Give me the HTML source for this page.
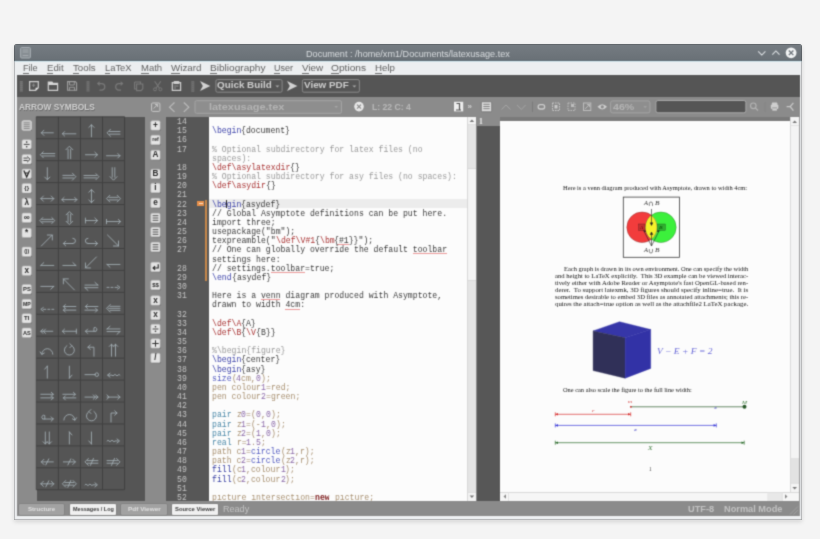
<!DOCTYPE html><html><head><meta charset="utf-8"><style>
*{margin:0;padding:0;box-sizing:border-box}
html,body{width:820px;height:539px;overflow:hidden;background:#f4f4f4;font-family:"Liberation Sans",sans-serif}
.a{position:absolute}
.t{position:absolute;white-space:pre;line-height:1}
.mono{font-family:"Liberation Mono",monospace}
.serif{font-family:"Liberation Serif",serif}
</style></head><body><svg width="0" height="0" style="position:absolute"><filter id="bl" x="0" y="0" width="100%" height="100%" color-interpolation-filters="sRGB"><feConvolveMatrix order="3" kernelMatrix="0.0625 0.25 0.0625 0.25 1 0.25 0.0625 0.25 0.0625" edgeMode="duplicate" preserveAlpha="true"/></filter></svg><div style="position:absolute;left:0;top:0;width:820px;height:539px;filter:url(#bl)"><div class="a" style="left:14px;top:44px;width:788px;height:475.5px;background:#eef0f2;border:1px solid #d8dadc;border-radius:3px 3px 0 0;box-shadow:0 2px 4px rgba(0,0,0,0.13)"></div><div class="a" style="left:14px;top:44px;width:788px;height:17px;background:linear-gradient(#757c82,#697076);border-radius:3px 3px 0 0"></div><div class="a" style="left:14px;top:60.2px;width:788px;height:0.9px;background:#5c6a72"></div><div class="a" style="left:14px;top:61px;width:788px;height:1.3px;background:#d6e8ee"></div><div class="a" style="left:15px;top:62px;width:786px;height:13px;background:#eceef0"></div><div class="a" style="left:17px;top:75px;width:783px;height:21.5px;background:#555555"></div><div class="a" style="left:17px;top:96.5px;width:783px;height:419.5px;background:#8b8b8b"></div><div class="a" style="left:36.5px;top:116.5px;width:108.5px;height:384.5px;background:#555555"></div><div class="a" style="left:166px;top:116.5px;width:42.5px;height:384.5px;background:#575757"></div><div class="a" style="left:208.5px;top:116.5px;width:258.8px;height:384.5px;background:#fcfcfc"></div><div class="a" style="left:467.3px;top:116.5px;width:9.2px;height:384.5px;background:#e4e4e4;border-left:1px solid #d8d8d8"></div><div class="a" style="left:467.8px;top:116.5px;width:8.7px;height:8.8px;background:#f3f3f3;border-bottom:0.6px solid #dedede"></div><div class="a" style="left:467.8px;top:168.4px;width:8.7px;height:112.6px;background:#f4f4f4;border-top:0.6px solid #d8d8d8;border-bottom:0.6px solid #d8d8d8"></div><div class="a" style="left:467.8px;top:492px;width:8.7px;height:9px;background:#f3f3f3;border-top:0.6px solid #dedede"></div><div class="a" style="left:476.5px;top:116.5px;width:23.5px;height:9.5px;background:#8b8b8b"></div><div class="a" style="left:476.5px;top:126px;width:23.5px;height:375px;background:#575757"></div><div class="a" style="left:500px;top:117px;width:290.4px;height:4px;background:#7a7a7a"></div><div class="a" style="left:500px;top:121px;width:290.4px;height:371.3px;background:#fcfcfc"></div><div class="a" style="left:790.2px;top:117px;width:9px;height:384px;background:#f4f4f4;border-left:1px solid #dadada"></div><div class="a" style="left:790.9px;top:458px;width:8.3px;height:25.4px;background:#e2e2e2"></div><div class="a" style="left:500px;top:492.3px;width:299.2px;height:8.8px;background:#f6f6f6;border-top:1px solid #dadada"></div><div class="a" style="left:23px;top:72.6px;width:5.572544361485504px;height:0.9px;background:#707070"></div><div class="a" style="left:47px;top:72.6px;width:6.4256607879584715px;height:0.9px;background:#707070"></div><div class="a" style="left:73px;top:72.6px;width:5.939739642594204px;height:0.9px;background:#707070"></div><div class="a" style="left:105px;top:72.6px;width:5.2173963355834125px;height:0.9px;background:#707070"></div><div class="a" style="left:140.8px;top:72.6px;width:7.943760761851209px;height:0.9px;background:#707070"></div><div class="a" style="left:170.6px;top:72.6px;width:9.221674283131625px;height:0.9px;background:#707070"></div><div class="a" style="left:209.8px;top:72.6px;width:6.738580777038053px;height:0.9px;background:#707070"></div><div class="a" style="left:273.7px;top:72.6px;width:6.498778953600236px;height:0.9px;background:#707070"></div><div class="a" style="left:302px;top:72.6px;width:6.578672675728715px;height:0.9px;background:#707070"></div><div class="a" style="left:331.2px;top:72.6px;width:7.921828032552768px;height:0.9px;background:#707070"></div><div class="a" style="left:375.1px;top:72.6px;width:7.022715186507636px;height:0.9px;background:#707070"></div><div class="a" style="left:208.5px;top:199.4px;width:258.8px;height:8.6px;background:#ececec"></div><div class="a" style="left:197px;top:200.7px;width:7px;height:5.3px;background:#e8904a"></div><div class="a" style="left:198.5px;top:203px;width:4px;height:0.9px;background:#fbe0c8"></div><div class="a" style="left:205.2px;top:200px;width:1.6px;height:81.3px;background:#c8884a"></div><div class="a" style="left:226.29999999999998px;top:200.2px;width:1px;height:7.6px;background:#222"></div><div class="a" style="left:337.34000000000003px;top:244.31px;width:11.76px;height:0.9px;background:#ec9a9a"></div><div class="a" style="left:412.8px;top:253.48px;width:34.300000000000004px;height:0.9px;background:#ec9a9a"></div><div class="a" style="left:270.7px;top:271.82px;width:34.300000000000004px;height:0.9px;background:#ec9a9a"></div><div class="a" style="left:260.9px;top:299.33px;width:19.6px;height:0.9px;background:#ec9a9a"></div><div class="a" style="left:285.4px;top:308.5px;width:14.700000000000001px;height:0.9px;background:#ec9a9a"></div><div class="a" style="left:18.6px;top:504px;width:45.6px;height:10.7px;background:#a2a2a2;border-radius:1px;box-shadow:0 0 0 0.5px #7a7a7a"></div><div class="a" style="left:69.6px;top:504px;width:46.400000000000006px;height:10.7px;background:#f0f0f0;border-radius:1px;box-shadow:0 0 0 0.5px #7a7a7a"></div><div class="a" style="left:121.2px;top:504px;width:45.499999999999986px;height:10.7px;background:#a2a2a2;border-radius:1px;box-shadow:0 0 0 0.5px #7a7a7a"></div><div class="a" style="left:172px;top:504px;width:46px;height:10.7px;background:#f0f0f0;border-radius:1px;box-shadow:0 0 0 0.5px #7a7a7a"></div><!--CONTENT--><svg class="a" style="left:0;top:0" width="820" height="539" viewBox="0 0 820 539"><rect x="19.8" y="81" width="3" height="10.599999999999994" fill="#767676"/><rect x="19.8" y="82" width="3" height="0.5" fill="#666"/><rect x="19.8" y="84" width="3" height="0.5" fill="#666"/><rect x="19.8" y="86" width="3" height="0.5" fill="#666"/><rect x="19.8" y="88" width="3" height="0.5" fill="#666"/><rect x="19.8" y="90" width="3" height="0.5" fill="#666"/><rect x="86.5" y="81" width="3" height="10.599999999999994" fill="#6e6e6e"/><rect x="86.5" y="82" width="3" height="0.5" fill="#666"/><rect x="86.5" y="84" width="3" height="0.5" fill="#666"/><rect x="86.5" y="86" width="3" height="0.5" fill="#666"/><rect x="86.5" y="88" width="3" height="0.5" fill="#666"/><rect x="86.5" y="90" width="3" height="0.5" fill="#666"/><rect x="191.3" y="81" width="3" height="11" fill="#6e6e6e"/><rect x="191.3" y="82" width="3" height="0.5" fill="#666"/><rect x="191.3" y="84" width="3" height="0.5" fill="#666"/><rect x="191.3" y="86" width="3" height="0.5" fill="#666"/><rect x="191.3" y="88" width="3" height="0.5" fill="#666"/><rect x="191.3" y="90" width="3" height="0.5" fill="#666"/><path d="M29.6 81.6 H38.3 V87.8 L35.6 90.3 H29.6 Z" fill="none" stroke="#cfcfcf" stroke-width="1.2"/><path d="M38.3 87.8 L35.6 90.3 V87.8 Z" fill="#e8e8e8"/><path d="M33.6 83.5 V87 M31.9 85.2 H35.3" stroke="#8a8a8a" stroke-width="1"/><path d="M48.3 82 H52 L53 83.3 H57.6 V90.3 H48.3 Z" fill="none" stroke="#cfcfcf" stroke-width="1.2"/><path d="M48.3 82 H52 L53 83.3 H57.6 V85 H48.3 Z" fill="#d8d8d8"/><path d="M67.6 81.6 H75.3 L76.6 82.9 V90.3 H67.6 Z" fill="none" stroke="#a0a0a0" stroke-width="1.1"/><path d="M69.5 81.6 V85 H74.3 V81.6 M69.5 90.3 V87.3 H74.5 V90.3" fill="none" stroke="#a0a0a0" stroke-width="0.9"/><path d="M98.3 83.6 H101.5 A3.3 3.3 0 0 1 101.5 90.2 H99.5" fill="none" stroke="#7a7a7a" stroke-width="1.2"/><path d="M96.9 83.6 L99.6 81.2 V86 Z" fill="#7a7a7a"/><path d="M122 83.6 H119 A3.3 3.3 0 0 0 119 90.2 H121" fill="none" stroke="#7a7a7a" stroke-width="1.2"/><path d="M123.4 83.6 L120.7 81.2 V86 Z" fill="#7a7a7a"/><path d="M134.6 82 H140.5 V84 M134.6 82 V89 H136.3" fill="none" stroke="#7a7a7a" stroke-width="1.1"/><path d="M136.6 84 H142.8 V88.8 L141 90.6 H136.6 Z" fill="none" stroke="#7a7a7a" stroke-width="1.1"/><path d="M154.6 81.3 L159.3 88 M160.8 81.3 L156.1 88" stroke="#7a7a7a" stroke-width="1.1"/><circle cx="155" cy="89.3" r="1.5" fill="none" stroke="#7a7a7a" stroke-width="1"/><circle cx="160.4" cy="89.3" r="1.5" fill="none" stroke="#7a7a7a" stroke-width="1"/><path d="M172.3 82.6 H180.6 V90.4 H172.3 Z" fill="none" stroke="#cfcfcf" stroke-width="1.2"/><rect x="173.6" y="81" width="5.8" height="3" rx="0.8" fill="#cfcfcf"/><path d="M173.8 86 H178.5 M173.8 88 H176" stroke="#9a9a9a" stroke-width="0.9"/><path d="M200 81 L210.3 86.0 L200 91 L202.8 86.0 Z" fill="#d2d2d2"/><path d="M287 81 L297.4 86.0 L287 91 L289.8 86.0 Z" fill="#d2d2d2"/><rect x="215.9" y="79.6" width="66.2" height="12.6" rx="1.5" fill="none" stroke="#8a8a8a" stroke-width="1"/><path d="M275.4 85.4 H279.4 L277.4 87.4 Z" fill="#a8a8a8"/><rect x="302.4" y="79.6" width="57" height="12.6" rx="1.5" fill="none" stroke="#8a8a8a" stroke-width="1"/><path d="M352.4 85.4 H356.4 L354.4 87.4 Z" fill="#a8a8a8"/><g stroke="#404040" stroke-width="1" fill="none"><path d="M36.3 116.80 H124.58"/><path d="M36.3 138.74 H124.58"/><path d="M36.3 160.68 H124.58"/><path d="M36.3 182.62 H124.58"/><path d="M36.3 204.56 H124.58"/><path d="M36.3 226.50 H124.58"/><path d="M36.3 248.44 H124.58"/><path d="M36.3 270.38 H124.58"/><path d="M36.3 292.32 H124.58"/><path d="M36.3 314.26 H124.58"/><path d="M36.3 336.20 H124.58"/><path d="M36.3 358.14 H124.58"/><path d="M36.3 380.08 H124.58"/><path d="M36.3 402.02 H124.58"/><path d="M36.3 423.96 H124.58"/><path d="M36.3 445.90 H124.58"/><path d="M36.3 467.84 H124.58"/><path d="M36.3 489.78 H124.58"/><path d="M36.30 116.8 V489.78"/><path d="M58.37 116.8 V489.78"/><path d="M80.44 116.8 V489.78"/><path d="M102.51 116.8 V489.78"/><path d="M124.58 116.8 V489.78"/></g><g stroke="#a4b0b6" stroke-width="0.85" fill="none" stroke-linecap="round" stroke-linejoin="round"><path transform="translate(36.80 116.80)" d="M4.5 16 L16.5 16 M7.1 13.4 L4.5 16 L7.1 18.6"/><path transform="translate(58.87 116.80)" d="M3.5 17 L17 17 M5.7 14.8 L3.5 17 L5.7 19.2"/><path transform="translate(80.94 116.80)" d="M10.5 8 L10.5 20 M7.9 10.6 L10.5 8 L13.1 10.6"/><path transform="translate(103.01 116.80)" d="M6.5 14.7 L17 14.7 M6.5 17.3 L17 17.3 M7.5 12.5 L4 16 L7.5 19.5"/><path transform="translate(36.80 138.74)" d="M5.5 14.8 L18 14.8 M5.5 17.2 L18 17.2 M6.5 13 L3.5 16 L6.5 19"/><path transform="translate(58.87 138.74)" d="M9.2 10.5 L9.2 20 M11.8 10.5 L11.8 20 M7 11 L10.5 7.5 L14 11"/><path transform="translate(80.94 138.74)" d="M4.5 16 L16.5 16 M13.9 13.4 L16.5 16 L13.9 18.6"/><path transform="translate(103.01 138.74)" d="M3.5 17 L17 17 M14.8 14.8 L17 17 L14.8 19.2"/><path transform="translate(36.80 160.68)" d="M10.5 7 L10.5 19 M7.9 16.4 L10.5 19 L13.1 16.4"/><path transform="translate(58.87 160.68)" d="M4 14.7 L14.5 14.7 M4 17.3 L14.5 17.3 M13.5 12.5 L17 16 L13.5 19.5"/><path transform="translate(80.94 160.68)" d="M3 14.8 L15.5 14.8 M3 17.2 L15.5 17.2 M15 13 L18 16 L15 19"/><path transform="translate(103.01 160.68)" d="M9.2 7 L9.2 16.5 M11.8 7 L11.8 16.5 M7 16 L10.5 19.5 L14 16"/><path transform="translate(36.80 182.62)" d="M4 16 L17 16 M6.6 13.4 L4 16 L6.6 18.6 M14.4 13.4 L17 16 L14.4 18.6"/><path transform="translate(58.87 182.62)" d="M3 17 L18 17 M5.2 14.8 L3 17 L5.2 19.2 M15.8 14.8 L18 17 L15.8 19.2"/><path transform="translate(80.94 182.62)" d="M10.5 7 L10.5 20 M7.9 9.6 L10.5 7 L13.1 9.6 M7.9 17.4 L10.5 20 L13.1 17.4"/><path transform="translate(103.01 182.62)" d="M6 14.7 L15 14.7 M6 17.3 L15 17.3 M6.8 12.7 L3.5 16 L6.8 19.3 M14.2 12.7 L17.5 16 L14.2 19.3"/><path transform="translate(36.80 204.56)" d="M5 14.8 L16 14.8 M5 17.2 L16 17.2 M6 13 L3 16 L6 19 M15 13 L18 16 L15 19"/><path transform="translate(58.87 204.56)" d="M9.2 9.5 L9.2 17.5 M11.8 9.5 L11.8 17.5 M7.2 10.3 L10.5 7 L13.8 10.3 M7.2 16.7 L10.5 20 L13.8 16.7"/><path transform="translate(80.94 204.56)" d="M4.5 16 L16.5 16 M13.9 13.4 L16.5 16 L13.9 18.6 M4.5 13.5 L4.5 18.5"/><path transform="translate(103.01 204.56)" d="M3.5 17 L17.5 17 M15.3 14.8 L17.5 17 L15.3 19.2 M3.5 14.8 L3.5 19.2"/><path transform="translate(36.80 226.50)" d="M4.5 19.5 L15.5 8.5 M10.5 8.5 L15.5 8.5 L15.5 13.5"/><path transform="translate(58.87 226.50)" d="M4.5 17 L14 17 M6.8 14.7 L4.5 17 L6.8 19.3 M14 17 A2.6 2.6 0 0 0 14 11.8"/><path transform="translate(80.94 226.50)" d="M7 17 L16.5 17 M14.2 14.7 L16.5 17 L14.2 19.3 M7 17 A2.6 2.6 0 0 1 7 11.8"/><path transform="translate(103.01 226.50)" d="M4.5 8.5 L15.5 19.5 M15.5 14.5 L15.5 19.5 L10.5 19.5"/><path transform="translate(36.80 248.44)" d="M4 17 L17 17 M4 17 L7 14.2"/><path transform="translate(58.87 248.44)" d="M4 17 L17 17 M17 17 L14 14.2"/><path transform="translate(80.94 248.44)" d="M15.5 8.5 L4.5 19.5 M4.5 14.5 L4.5 19.5 L9.5 19.5"/><path transform="translate(103.01 248.44)" d="M4 16 L17 16 M4 16 L7 18.8"/><path transform="translate(36.80 270.38)" d="M4 16 L17 16 M17 16 L14 18.8"/><path transform="translate(58.87 270.38)" d="M15.5 19.5 L4.5 8.5 M4.5 13.5 L4.5 8.5 L9.5 8.5"/><path transform="translate(80.94 270.38)" d="M4 14.7 L17 14.7 M17 14.7 L14 12 M4 17.3 L17 17.3 M4 17.3 L7 20"/><path transform="translate(103.01 270.38)" d="M4 17 H6 M8 17 H10 M12 17 H14.5 M14.5 15.2 L17 17 L14.5 18.8"/><path transform="translate(36.80 292.32)" d="M17 17 H15 M13 17 H11 M9 17 H6.5 M6.5 15.2 L4 17 L6.5 18.8"/><path transform="translate(58.87 292.32)" d="M4.5 14.2 L17 14.2 M6.5 12.2 L4.5 14.2 L6.5 16.2 M4.5 17.8 L17 17.8 M6.5 15.8 L4.5 17.8 L6.5 19.8"/><path transform="translate(80.94 292.32)" d="M4.5 14.2 L17 14.2 M6.5 12.2 L4.5 14.2 L6.5 16.2 M4 17.8 L16.5 17.8 M14.5 15.8 L16.5 17.8 L14.5 19.8"/><path transform="translate(103.01 292.32)" d="M7 14 L17 14 M5.5 16 L17 16 M7 18 L17 18 M7.3 12.2 L3.5 16 L7.3 19.8"/><path transform="translate(36.80 314.26)" d="M4 17 L16 17 M6.2 14.8 L4 17 L6.2 19.2 M8.7 14.8 L6.5 17 L8.7 19.2"/><path transform="translate(58.87 314.26)" d="M3.5 17 L17.5 17 M5.7 14.8 L3.5 17 L5.7 19.2 M17.5 14.8 L17.5 19.2"/><path transform="translate(80.94 314.26)" d="M4.5 17 L15 17 M6.7 14.8 L4.5 17 L6.7 19.2 M13 17 V13.5 A2 2 0 1 1 15 17"/><path transform="translate(103.01 314.26)" d="M4 14.7 L17 14.7 M4 14.7 L7 12 M4 17.3 L17 17.3 M17 17.3 L14 20"/><path transform="translate(36.80 336.20)" d="M5 18 A5.5 5.5 0 0 1 16 18 M3.3 15.7 L5 18.2 L7.5 16.8"/><path transform="translate(58.87 336.20)" d="M8 9.5 A5 5 0 1 0 13 9.5 M11 7.5 L13 9.5 L11 11.5"/><path transform="translate(80.94 336.20)" d="M13 20 V11 H7 M9.3 8.7 L7 11 L9.3 13.3"/><path transform="translate(103.01 336.20)" d="M8.5 8 L8.5 20 M6.3 10.2 L8.5 8 L10.7 10.2 M12.5 8 L12.5 20 M10.3 10.2 L12.5 8 L14.7 10.2"/><path transform="translate(36.80 358.14)" d="M10.5 8 L10.5 20 M10.5 8 L7.9 11"/><path transform="translate(58.87 358.14)" d="M10.5 8 L10.5 20 M10.5 20 L13.1 17"/><path transform="translate(80.94 358.14)" d="M4 16.5 L14 16.5 M14 16.5 a1.8 1.8 0 1 0 3.6 0 a1.8 1.8 0 1 0 -3.6 0"/><path transform="translate(103.01 358.14)" d="M17 17 q-1 -1.5 -2 0 t-2 0 t-2 0 t-2 0 H5 M7 15 L4.5 17 L7 19"/><path transform="translate(36.80 380.08)" d="M4 14.2 L16.5 14.2 M14.5 12.2 L16.5 14.2 L14.5 16.2 M4 17.8 L16.5 17.8 M14.5 15.8 L16.5 17.8 L14.5 19.8"/><path transform="translate(58.87 380.08)" d="M4 14.2 L16.5 14.2 M14.5 12.2 L16.5 14.2 L14.5 16.2 M4.5 17.8 L17 17.8 M6.5 15.8 L4.5 17.8 L6.5 19.8"/><path transform="translate(80.94 380.08)" d="M4 17 L17 17 M14.8 14.8 L17 17 L14.8 19.2 M12.3 14.8 L14.5 17 L12.3 19.2"/><path transform="translate(103.01 380.08)" d="M4 17 L17 17 M14.8 14.8 L17 17 L14.8 19.2 M4 14.8 L6 17 L4 19.2"/><path transform="translate(36.80 402.02)" d="M6 17 L16.5 17 M14.3 14.8 L16.5 17 L14.3 19.2 M8 17 V13.5 A2 2 0 1 0 6 17"/><path transform="translate(58.87 402.02)" d="M5 18 A5.5 5.5 0 0 1 16 18 M13.5 16.8 L16 18.2 L17.7 15.7"/><path transform="translate(80.94 402.02)" d="M13 9.5 A5 5 0 1 1 8 9.5 M10 7.5 L8 9.5 L10 11.5"/><path transform="translate(103.01 402.02)" d="M8 20 V11 H14 M11.7 8.7 L14 11 L11.7 13.3"/><path transform="translate(36.80 423.96)" d="M8.5 8 L8.5 20 M6.3 17.8 L8.5 20 L10.7 17.8 M12.5 8 L12.5 20 M10.3 17.8 L12.5 20 L14.7 17.8"/><path transform="translate(58.87 423.96)" d="M10.5 8 L10.5 20 M10.5 8 L13.1 11"/><path transform="translate(80.94 423.96)" d="M10.5 8 L10.5 20 M10.5 20 L7.9 17"/><path transform="translate(103.01 423.96)" d="M4 17 q1 -1.5 2 0 t2 0 t2 0 t2 0 H15 M14 15 L16.5 17 L14 19"/><path transform="translate(36.80 445.90)" d="M4.5 16 L16.5 16 M7.1 13.4 L4.5 16 L7.1 18.6 M9 19 L12 13"/><path transform="translate(58.87 445.90)" d="M4.5 16 L16.5 16 M13.9 13.4 L16.5 16 L13.9 18.6 M9 19 L12 13"/><path transform="translate(80.94 445.90)" d="M6.5 14.7 L17 14.7 M6.5 17.3 L17 17.3 M7.5 12.5 L4 16 L7.5 19.5 M9.5 19.5 L12.5 12.5"/><path transform="translate(103.01 445.90)" d="M4 14.7 L14.5 14.7 M4 17.3 L14.5 17.3 M13.5 12.5 L17 16 L13.5 19.5 M8.5 19.5 L11.5 12.5"/><path transform="translate(36.80 467.84)" d="M4 16 L17 16 M6.6 13.4 L4 16 L6.6 18.6 M14.4 13.4 L17 16 L14.4 18.6 M9 19 L12 13"/><path transform="translate(58.87 467.84)" d="M6 14.7 L15 14.7 M6 17.3 L15 17.3 M6.8 12.7 L3.5 16 L6.8 19.3 M14.2 12.7 L17.5 16 L14.2 19.3 M9 19.5 L12 12.5"/><path transform="translate(80.94 467.84)" d="M4 17 q1 -1.5 2 0 t2 0 t2 0 t2 0 H15 M14 15 L16.5 17 L14 19"/></g><rect x="22.60" y="121.50" width="9.4" height="9.4" rx="1.5" fill="#6e6e6e"/><rect x="22.00" y="120.80" width="9.4" height="9.4" rx="1.5" fill="#e4e4e4" stroke="#b8b8b8" stroke-width="0.6"/><rect x="22.00" y="120.80" width="9.4" height="9.4" rx="1.5" fill="#c4c4c4" stroke="#d8d8d8" stroke-width="0.6"/><path d="M23.80 122.80 H29.60" stroke="#8a8a8a" stroke-width="0.9"/><path d="M23.80 124.70 H29.60" stroke="#8a8a8a" stroke-width="0.9"/><path d="M23.80 126.60 H29.60" stroke="#8a8a8a" stroke-width="0.9"/><path d="M23.80 128.50 H29.60" stroke="#8a8a8a" stroke-width="0.9"/><rect x="22.60" y="140.40" width="9.4" height="9.4" rx="1.5" fill="#6e6e6e"/><rect x="22.00" y="139.70" width="9.4" height="9.4" rx="1.5" fill="#e4e4e4" stroke="#b8b8b8" stroke-width="0.6"/><path d="M23.80 144.40 H29.60" stroke="#333" stroke-width="0.9"/><circle cx="26.7" cy="142.1" r="0.8" fill="#333"/><circle cx="26.7" cy="146.70000000000002" r="0.8" fill="#333"/><rect x="22.60" y="155.30" width="9.4" height="9.4" rx="1.5" fill="#6e6e6e"/><rect x="22.00" y="154.60" width="9.4" height="9.4" rx="1.5" fill="#e4e4e4" stroke="#b8b8b8" stroke-width="0.6"/><path d="M23.50 158.10 H27.70 M23.50 160.50 H27.70 M27.20 156.50 L30.10 159.30 L27.20 162.10" fill="none" stroke="#333" stroke-width="0.9"/><rect x="22.60" y="169.80" width="9.4" height="9.4" rx="1.5" fill="#6e6e6e"/><rect x="22.00" y="169.10" width="9.4" height="9.4" rx="1.5" fill="#e4e4e4" stroke="#b8b8b8" stroke-width="0.6"/><path d="M23.80 170.60 L26.70 177.00 L29.60 170.60 M24.70 173.00 H28.70" fill="none" stroke="#222" stroke-width="1.2"/><rect x="22.60" y="184.20" width="9.4" height="9.4" rx="1.5" fill="#6e6e6e"/><rect x="22.00" y="183.50" width="9.4" height="9.4" rx="1.5" fill="#e4e4e4" stroke="#b8b8b8" stroke-width="0.6"/><rect x="22.60" y="198.90" width="9.4" height="9.4" rx="1.5" fill="#6e6e6e"/><rect x="22.00" y="198.20" width="9.4" height="9.4" rx="1.5" fill="#e4e4e4" stroke="#b8b8b8" stroke-width="0.6"/><rect x="22.60" y="213.80" width="9.4" height="9.4" rx="1.5" fill="#6e6e6e"/><rect x="22.00" y="213.10" width="9.4" height="9.4" rx="1.5" fill="#e4e4e4" stroke="#b8b8b8" stroke-width="0.6"/><rect x="22.60" y="228.90" width="9.4" height="9.4" rx="1.5" fill="#6e6e6e"/><rect x="22.00" y="228.20" width="9.4" height="9.4" rx="1.5" fill="#e4e4e4" stroke="#b8b8b8" stroke-width="0.6"/><rect x="22.60" y="247.80" width="9.4" height="9.4" rx="1.5" fill="#6e6e6e"/><rect x="22.00" y="247.10" width="9.4" height="9.4" rx="1.5" fill="#e4e4e4" stroke="#b8b8b8" stroke-width="0.6"/><rect x="22.60" y="266.70" width="9.4" height="9.4" rx="1.5" fill="#6e6e6e"/><rect x="22.00" y="266.00" width="9.4" height="9.4" rx="1.5" fill="#e4e4e4" stroke="#b8b8b8" stroke-width="0.6"/><rect x="22.60" y="285.30" width="9.4" height="9.4" rx="1.5" fill="#6e6e6e"/><rect x="22.00" y="284.60" width="9.4" height="9.4" rx="1.5" fill="#e4e4e4" stroke="#b8b8b8" stroke-width="0.6"/><rect x="22.60" y="300.00" width="9.4" height="9.4" rx="1.5" fill="#6e6e6e"/><rect x="22.00" y="299.30" width="9.4" height="9.4" rx="1.5" fill="#e4e4e4" stroke="#b8b8b8" stroke-width="0.6"/><rect x="22.60" y="314.40" width="9.4" height="9.4" rx="1.5" fill="#6e6e6e"/><rect x="22.00" y="313.70" width="9.4" height="9.4" rx="1.5" fill="#e4e4e4" stroke="#b8b8b8" stroke-width="0.6"/><rect x="22.60" y="328.70" width="9.4" height="9.4" rx="1.5" fill="#6e6e6e"/><rect x="22.00" y="328.00" width="9.4" height="9.4" rx="1.5" fill="#e4e4e4" stroke="#b8b8b8" stroke-width="0.6"/><rect x="151.40" y="121.50" width="9.4" height="9.4" rx="1.5" fill="#6e6e6e"/><rect x="150.80" y="120.80" width="9.4" height="9.4" rx="1.5" fill="#e4e4e4" stroke="#b8b8b8" stroke-width="0.6"/><rect x="151.40" y="136.00" width="9.4" height="9.4" rx="1.5" fill="#6e6e6e"/><rect x="150.80" y="135.30" width="9.4" height="9.4" rx="1.5" fill="#e4e4e4" stroke="#b8b8b8" stroke-width="0.6"/><rect x="151.40" y="151.00" width="9.4" height="9.4" rx="1.5" fill="#6e6e6e"/><rect x="150.80" y="150.30" width="9.4" height="9.4" rx="1.5" fill="#e4e4e4" stroke="#b8b8b8" stroke-width="0.6"/><rect x="151.40" y="170.00" width="9.4" height="9.4" rx="1.5" fill="#6e6e6e"/><rect x="150.80" y="169.30" width="9.4" height="9.4" rx="1.5" fill="#e4e4e4" stroke="#b8b8b8" stroke-width="0.6"/><rect x="151.40" y="184.00" width="9.4" height="9.4" rx="1.5" fill="#6e6e6e"/><rect x="150.80" y="183.30" width="9.4" height="9.4" rx="1.5" fill="#e4e4e4" stroke="#b8b8b8" stroke-width="0.6"/><rect x="151.40" y="199.00" width="9.4" height="9.4" rx="1.5" fill="#6e6e6e"/><rect x="150.80" y="198.30" width="9.4" height="9.4" rx="1.5" fill="#e4e4e4" stroke="#b8b8b8" stroke-width="0.6"/><rect x="151.40" y="214.00" width="9.4" height="9.4" rx="1.5" fill="#6e6e6e"/><rect x="150.80" y="213.30" width="9.4" height="9.4" rx="1.5" fill="#e4e4e4" stroke="#b8b8b8" stroke-width="0.6"/><path d="M152.60 215.70 H158.40" stroke="#444" stroke-width="0.9"/><path d="M152.60 218.00 H158.40" stroke="#444" stroke-width="0.9"/><path d="M152.60 220.30 H158.40" stroke="#444" stroke-width="0.9"/><rect x="151.40" y="228.00" width="9.4" height="9.4" rx="1.5" fill="#6e6e6e"/><rect x="150.80" y="227.30" width="9.4" height="9.4" rx="1.5" fill="#e4e4e4" stroke="#b8b8b8" stroke-width="0.6"/><path d="M152.60 229.70 H158.40" stroke="#444" stroke-width="0.9"/><path d="M152.60 232.00 H158.40" stroke="#444" stroke-width="0.9"/><path d="M152.60 234.30 H158.40" stroke="#444" stroke-width="0.9"/><rect x="151.40" y="243.00" width="9.4" height="9.4" rx="1.5" fill="#6e6e6e"/><rect x="150.80" y="242.30" width="9.4" height="9.4" rx="1.5" fill="#e4e4e4" stroke="#b8b8b8" stroke-width="0.6"/><path d="M152.60 244.70 H158.40" stroke="#444" stroke-width="0.9"/><path d="M152.60 247.00 H158.40" stroke="#444" stroke-width="0.9"/><path d="M152.60 249.30 H158.40" stroke="#444" stroke-width="0.9"/><rect x="151.40" y="263.00" width="9.4" height="9.4" rx="1.5" fill="#6e6e6e"/><rect x="150.80" y="262.30" width="9.4" height="9.4" rx="1.5" fill="#e4e4e4" stroke="#b8b8b8" stroke-width="0.6"/><path d="M158.20 264.30 V268.00 H153.30 M155.10 266.20 L153.10 268.00 L155.10 269.80" fill="none" stroke="#222" stroke-width="1.1"/><rect x="151.40" y="281.00" width="9.4" height="9.4" rx="1.5" fill="#6e6e6e"/><rect x="150.80" y="280.30" width="9.4" height="9.4" rx="1.5" fill="#e4e4e4" stroke="#b8b8b8" stroke-width="0.6"/><rect x="151.40" y="296.50" width="9.4" height="9.4" rx="1.5" fill="#6e6e6e"/><rect x="150.80" y="295.80" width="9.4" height="9.4" rx="1.5" fill="#e4e4e4" stroke="#b8b8b8" stroke-width="0.6"/><rect x="151.40" y="311.00" width="9.4" height="9.4" rx="1.5" fill="#6e6e6e"/><rect x="150.80" y="310.30" width="9.4" height="9.4" rx="1.5" fill="#e4e4e4" stroke="#b8b8b8" stroke-width="0.6"/><rect x="151.40" y="325.00" width="9.4" height="9.4" rx="1.5" fill="#6e6e6e"/><rect x="150.80" y="324.30" width="9.4" height="9.4" rx="1.5" fill="#e4e4e4" stroke="#b8b8b8" stroke-width="0.6"/><path d="M152.60 329.00 H158.40" stroke="#333" stroke-width="0.9"/><circle cx="155.5" cy="326.7" r="0.8" fill="#333"/><circle cx="155.5" cy="331.3" r="0.8" fill="#333"/><rect x="151.40" y="339.50" width="9.4" height="9.4" rx="1.5" fill="#6e6e6e"/><rect x="150.80" y="338.80" width="9.4" height="9.4" rx="1.5" fill="#e4e4e4" stroke="#b8b8b8" stroke-width="0.6"/><path d="M155.50 340.30 V346.70 M152.30 343.50 H158.70" stroke="#333" stroke-width="1"/><rect x="151.40" y="354.00" width="9.4" height="9.4" rx="1.5" fill="#6e6e6e"/><rect x="150.80" y="353.30" width="9.4" height="9.4" rx="1.5" fill="#e4e4e4" stroke="#b8b8b8" stroke-width="0.6"/><rect x="151.6" y="103" width="8.3" height="8.4" rx="1" fill="none" stroke="#c8c8c8" stroke-width="1"/><path d="M153.6 108.5 L157.6 104.5 M155 104.5 H157.6 V107" fill="none" stroke="#c8c8c8" stroke-width="0.9"/><path d="M174.5 102.5 L169.5 107.2 L174.5 111.9" fill="none" stroke="#bdbdbd" stroke-width="1.1"/><path d="M183.8 102.5 L188.8 107.2 L183.8 111.9" fill="none" stroke="#bdbdbd" stroke-width="1.1"/><rect x="195" y="100.7" width="146.5" height="12.6" rx="1.5" fill="#8e8e8e" stroke="#a4a4a4" stroke-width="1"/><path d="M334.3 106 H338 L336.15 107.9 Z" fill="#a6a6a6"/><circle cx="359" cy="106.6" r="4.8" fill="#e8e8e8"/><path d="M357 104.6 L361 108.6 M361 104.6 L357 108.6" stroke="#8b8b8b" stroke-width="1.2"/><rect x="454" y="101.8" width="9.2" height="9.6" fill="#eeeeee"/><path d="M456.5 103.5 H459.5 V110 M456 110 H461" stroke="#555" stroke-width="1.2" fill="none"/><rect x="481.3" y="101.8" width="10.4" height="10" rx="1" fill="#dcdcdc" stroke="#707070" stroke-width="0.8"/><path d="M483.3 104.3 H489.7 M483.3 106.5 H489.7 M483.3 108.7 H489.7" stroke="#777" stroke-width="0.9"/><path d="M501.5 109.5 L506 105 L510.5 109.5 M517 105 L521.3 109.5 L525.6 105" fill="none" stroke="#a4a4a4" stroke-width="1"/><path d="M532.5 101.5 V112" stroke="#7a7a7a" stroke-width="1"/><rect x="538.2" y="104.6" width="6.4" height="4.4" rx="2" fill="none" stroke="#cdcdcd" stroke-width="1.3"/><path d="M552.5 103 H559.5 V110.5 H552.5 Z" fill="none" stroke="#c8c8c8" stroke-width="1" stroke-dasharray="1.5 1"/><rect x="554.5" y="105" width="3" height="3.5" fill="#c8c8c8"/><path d="M568 103 H575 V110.5 H568 Z" fill="none" stroke="#bdbdbd" stroke-width="1" stroke-dasharray="1.5 1"/><rect x="571" y="104" width="3" height="3" fill="#bdbdbd"/><rect x="583.5" y="103" width="7.3" height="7.5" fill="none" stroke="#bdbdbd" stroke-width="1"/><path d="M585 109 L589.5 104.5 M587 104.5 H589.5 V107" fill="none" stroke="#bdbdbd" stroke-width="0.9"/><path d="M597.5 106.8 Q602.3 101.5 607 106.8 Q602.3 112 597.5 106.8 Z" fill="#cfcfcf"/><circle cx="602.3" cy="106.8" r="1.6" fill="#8b8b8b"/><rect x="610.6" y="100.9" width="39.4" height="12" rx="2" fill="#8e8e8e" stroke="#a4a4a4" stroke-width="1"/><path d="M643.3 106.2 H647 L645.15 108.1 Z" fill="#a6a6a6"/><rect x="655.9" y="100.5" width="90" height="12.3" rx="2" fill="#555555" stroke="#a8a8a8" stroke-width="1"/><circle cx="753.3" cy="105.8" r="2.8" fill="none" stroke="#b4b4b4" stroke-width="1.1"/><path d="M755.3 107.8 L758 110.5" stroke="#b4b4b4" stroke-width="1.2"/><rect x="771.8" y="102.6" width="5.6" height="2.4" rx="0.8" fill="#cfcfcf"/><rect x="770.8" y="104.6" width="7.6" height="4.4" rx="1.2" fill="#cfcfcf"/><rect x="772.3" y="108.4" width="4.6" height="2.2" fill="#cfcfcf"/><path d="M772.2 107.9 H777" stroke="#8b8b8b" stroke-width="0.8"/><path d="M786.6 106.6 H790.2 L793.4 102.9 M790.2 106.6 L793.4 110.6" fill="none" stroke="#c8c8c8" stroke-width="1.3"/><path d="M765 102 V112" stroke="#848484" stroke-width="0.8"/><path d="M758.2 51.4 L761.8 55 L765.4 51.4 M772.3 54.6 L775.9 51 L779.5 54.6" fill="none" stroke="#dfe3e6" stroke-width="1.05"/><circle cx="791.1" cy="52.8" r="5.4" fill="#f2f4f5"/><path d="M788.8 50.5 L793.4 55.1 M793.4 50.5 L788.8 55.1" stroke="#6a7178" stroke-width="1.3"/><rect x="20.6" y="47.5" width="9.8" height="10.5" rx="1" fill="#868d92" stroke="#a8afb4" stroke-width="1"/><path d="M22.6 50 H28.4 M22.6 52 H28.4 M22.6 55.5 H28.4" stroke="#a8aeb2" stroke-width="0.9"/><path d="M469.6 122 L471.9 119.6 L474.2 122 Z" fill="#777"/><path d="M469.6 495.5 L471.9 497.9 L474.2 495.5 Z" fill="#777"/><path d="M790.5 125.5 H799" stroke="#e0e0e0" stroke-width="0.8"/><path d="M792.4 123 L794.7 120.6 L797 123 Z" fill="#777"/><path d="M790.5 483.4 H799" stroke="#dadada" stroke-width="0.8"/><path d="M792.4 487 L794.7 489.4 L797 487 Z" fill="#777"/><path d="M503.5 496.5 L506 494.2 V498.8 Z" fill="#888"/><path d="M508.5 492.5 V501" stroke="#e2e2e2" stroke-width="1"/><rect x="767.2" y="492.8" width="15" height="8.2" fill="#e8e8e8"/><path d="M785 494.2 L787.5 496.5 L785 498.8 Z" fill="#888"/><path d="M782.3 492.5 V501" stroke="#e2e2e2" stroke-width="1"/><path d="M799.5 117 V516" stroke="#9a9a9a" stroke-width="1"/><rect x="623.3" y="197.1" width="56.3" height="60.2" fill="#fdfdfd" stroke="#3a3a3a" stroke-width="0.8"/><defs><clipPath id="cl"><circle cx="642.1" cy="227.3" r="15.3"/></clipPath></defs><circle cx="642.1" cy="227.3" r="15.3" fill="#f23c3c" stroke="#7a2a2a" stroke-width="0.4"/><circle cx="660.9" cy="227.3" r="15.3" fill="#3cf03c" stroke="#2a7a2a" stroke-width="0.4"/><circle cx="660.9" cy="227.3" r="15.3" fill="#f6f22a" clip-path="url(#cl)"/><path d="M651.5 215.5 A15.3 15.3 0 0 1 651.5 239.1" fill="none" stroke="#555" stroke-width="0.4"/><rect x="638.6" y="224" width="6.3" height="6.3" fill="#c83030" stroke="#602020" stroke-width="0.4"/><rect x="657.4" y="224" width="7.9" height="6.3" fill="#30b030" stroke="#205a20" stroke-width="0.4"/><path d="M651.5 209 V225 M651.5 246 L644.5 232 M651.5 246 L651.5 232.5 M651.5 246 L658.5 232" fill="none" stroke="#222" stroke-width="0.6"/><path d="M650.2 222.8 L651.5 225.5 L652.8 222.8 Z M643.5 230.6 L644.5 232 L646 231 Z M650.2 234.6 L651.5 232 L652.8 234.6 Z M657 231 L658.5 232 L659.5 230.6 Z" fill="#222" stroke="#222" stroke-width="0.5"/><path d="M649.3 205.9 V203.6 A1.6 1.6 0 0 1 652.5 203.6 V205.9" fill="none" stroke="#333" stroke-width="0.6"/><path d="M649.3 249.1 V251.4 A1.6 1.6 0 0 0 652.5 251.4 V249.1" fill="none" stroke="#333" stroke-width="0.6"/><path d="M593.1 330.9 L619.5 321.7 L650.7 329.5 L625.1 337.8 Z" fill="#3636a8" stroke="#3636a8" stroke-width="0.4"/><path d="M593.1 330.9 L625.1 337.8 L625.1 378.2 L593.1 370.6 Z" fill="#303058" stroke="#303058" stroke-width="0.4"/><path d="M625.1 337.8 L650.7 329.5 L650.7 368.4 L625.1 378.2 Z" fill="#3232a6" stroke="#3232a6" stroke-width="0.4"/><path d="M630.7 406.8 H744.7" stroke="#2a5a2a" stroke-width="0.7"/><circle cx="744.5" cy="406.8" r="2" fill="#2a5a2a"/><circle cx="630.9" cy="406.8" r="0.9" fill="#d02020"/><path d="M555.3 414.3 H630.7 M555.3 412.3 V416.3 M630.7 412.3 V416.3" stroke="#d83030" stroke-width="0.7"/><path d="M555.3 414.3 L558 413 V415.6 Z M630.7 414.3 L628 413 V415.6 Z" fill="#d83030"/><path d="M555.3 425.4 H716.3 M555.3 423.4 V427.4 M716.3 423.4 V427.4" stroke="#3a3ad8" stroke-width="0.7"/><path d="M555.3 425.4 L558 424.1 V426.7 Z M716.3 425.4 L713.6 424.1 V426.7 Z" fill="#3a3ad8"/><path d="M555.3 442.7 H744.2 M555.3 440.7 V444.7 M744.2 440.7 V444.7" stroke="#2a6a2a" stroke-width="0.7"/><path d="M555.3 442.7 L558 441.4 V444 Z M744.2 442.7 L741.5 441.4 V444 Z" fill="#2a6a2a"/><path d="M790 514.5 L798 506.5 M793.5 514.5 L798 510" stroke="#a4a4a4" stroke-width="0.8"/></svg><div class="t" style="left:306.20px;top:48.67px;font-weight:400;font-size:9.6px;font-family:'Liberation Sans',sans-serif;color:#d8dcdf;transform:scaleX(0.9482);transform-origin:0 0;">Document : /home/xm1/Documents/latexusage.tex</div><div class="t" style="left:23.00px;top:63.81px;font-weight:400;font-size:9.2px;font-family:'Liberation Sans',sans-serif;color:#606060;transform:scaleX(0.9916);transform-origin:0 0;">File</div><div class="t" style="left:47.00px;top:63.81px;font-weight:400;font-size:9.2px;font-family:'Liberation Sans',sans-serif;color:#606060;transform:scaleX(1.0471);transform-origin:0 0;">Edit</div><div class="t" style="left:73.00px;top:63.81px;font-weight:400;font-size:9.2px;font-family:'Liberation Sans',sans-serif;color:#606060;transform:scaleX(1.0569);transform-origin:0 0;">Tools</div><div class="t" style="left:105.00px;top:63.81px;font-weight:400;font-size:9.2px;font-family:'Liberation Sans',sans-serif;color:#606060;transform:scaleX(1.0197);transform-origin:0 0;">LaTeX</div><div class="t" style="left:140.80px;top:63.81px;font-weight:400;font-size:9.2px;font-family:'Liberation Sans',sans-serif;color:#606060;transform:scaleX(1.0365);transform-origin:0 0;">Math</div><div class="t" style="left:170.60px;top:63.81px;font-weight:400;font-size:9.2px;font-family:'Liberation Sans',sans-serif;color:#606060;transform:scaleX(1.0620);transform-origin:0 0;">Wizard</div><div class="t" style="left:209.80px;top:63.81px;font-weight:400;font-size:9.2px;font-family:'Liberation Sans',sans-serif;color:#606060;transform:scaleX(1.0981);transform-origin:0 0;">Bibliography</div><div class="t" style="left:273.70px;top:63.81px;font-weight:400;font-size:9.2px;font-family:'Liberation Sans',sans-serif;color:#606060;transform:scaleX(0.9781);transform-origin:0 0;">User</div><div class="t" style="left:302.00px;top:63.81px;font-weight:400;font-size:9.2px;font-family:'Liberation Sans',sans-serif;color:#606060;transform:scaleX(1.0720);transform-origin:0 0;">View</div><div class="t" style="left:331.20px;top:63.81px;font-weight:400;font-size:9.2px;font-family:'Liberation Sans',sans-serif;color:#606060;transform:scaleX(1.1070);transform-origin:0 0;">Options</div><div class="t" style="left:375.10px;top:63.81px;font-weight:400;font-size:9.2px;font-family:'Liberation Sans',sans-serif;color:#606060;transform:scaleX(1.0570);transform-origin:0 0;">Help</div><div class="t" style="left:216.90px;top:81.11px;font-weight:700;font-size:9.2px;font-family:'Liberation Sans',sans-serif;color:#cdcdcd;transform:scaleX(1.0721);transform-origin:0 0;">Quick Build</div><div class="t" style="left:303.70px;top:81.11px;font-weight:700;font-size:9.2px;font-family:'Liberation Sans',sans-serif;color:#cdcdcd;transform:scaleX(1.0729);transform-origin:0 0;">View PDF</div><div class="t" style="left:19.00px;top:102.66px;font-weight:700;font-size:8.9px;font-family:'Liberation Sans',sans-serif;color:#d2d2d2;transform:scaleX(0.9373);transform-origin:0 0;text-shadow:0.6px 0.6px 0.6px #666;">ARROW SYMBOLS</div><div class="t" style="left:24.37px;top:185.28px;font-weight:700;font-size:6.0px;font-family:'Liberation Sans',sans-serif;color:#2a2a2a;transform:scaleX(1.0000);transform-origin:0 0;">{}</div><div class="t" style="left:24.42px;top:198.91px;font-weight:700;font-size:8.2px;font-family:'Liberation Sans',sans-serif;color:#2a2a2a;transform:scaleX(1.0000);transform-origin:0 0;">λ</div><div class="t" style="left:23.78px;top:213.81px;font-weight:700;font-size:8.2px;font-family:'Liberation Sans',sans-serif;color:#2a2a2a;transform:scaleX(1.0000);transform-origin:0 0;">∞</div><div class="t" style="left:25.10px;top:228.91px;font-weight:700;font-size:8.2px;font-family:'Liberation Sans',sans-serif;color:#2a2a2a;transform:scaleX(1.0000);transform-origin:0 0;">*</div><div class="t" style="left:24.24px;top:249.27px;font-weight:700;font-size:5.2px;font-family:'Liberation Sans',sans-serif;color:#2a2a2a;transform:scaleX(1.0000);transform-origin:0 0;">(|)</div><div class="t" style="left:24.42px;top:266.71px;font-weight:700;font-size:8.2px;font-family:'Liberation Sans',sans-serif;color:#2a2a2a;transform:scaleX(1.0000);transform-origin:0 0;">x</div><div class="t" style="left:22.80px;top:286.38px;font-weight:700;font-size:6.0px;font-family:'Liberation Sans',sans-serif;color:#2a2a2a;transform:scaleX(0.9745);transform-origin:0 0;">PS</div><div class="t" style="left:22.80px;top:301.08px;font-weight:700;font-size:6.0px;font-family:'Liberation Sans',sans-serif;color:#2a2a2a;transform:scaleX(0.8666);transform-origin:0 0;">MP</div><div class="t" style="left:24.03px;top:315.48px;font-weight:700;font-size:6.0px;font-family:'Liberation Sans',sans-serif;color:#2a2a2a;transform:scaleX(1.0000);transform-origin:0 0;">TI</div><div class="t" style="left:22.80px;top:329.78px;font-weight:700;font-size:6.0px;font-family:'Liberation Sans',sans-serif;color:#2a2a2a;transform:scaleX(0.9358);transform-origin:0 0;">AS</div><div class="t" style="left:153.11px;top:121.51px;font-weight:700;font-size:8.2px;font-family:'Liberation Sans',sans-serif;color:#2a2a2a;transform:scaleX(1.0000);transform-origin:0 0;">+</div><div class="t" style="left:152.18px;top:137.47px;font-weight:700;font-size:5.2px;font-family:'Liberation Sans',sans-serif;color:#2a2a2a;transform:scaleX(1.0000);transform-origin:0 0;">ref</div><div class="t" style="left:152.54px;top:151.01px;font-weight:700;font-size:8.2px;font-family:'Liberation Sans',sans-serif;color:#2a2a2a;transform:scaleX(1.0000);transform-origin:0 0;">A</div><div class="t" style="left:152.54px;top:170.01px;font-weight:700;font-size:8.2px;font-family:'Liberation Sans',sans-serif;color:#2a2a2a;transform:scaleX(1.0000);transform-origin:0 0;">B</div><div class="t" style="left:154.36px;top:184.01px;font-weight:700;font-size:8.2px;font-family:'Liberation Sans',sans-serif;color:#2a2a2a;transform:scaleX(1.0000);transform-origin:0 0;">i</div><div class="t" style="left:153.22px;top:199.01px;font-weight:700;font-size:8.2px;font-family:'Liberation Sans',sans-serif;color:#2a2a2a;transform:scaleX(1.0000);transform-origin:0 0;">e</div><div class="t" style="left:152.16px;top:282.08px;font-weight:700;font-size:6.0px;font-family:'Liberation Sans',sans-serif;color:#2a2a2a;transform:scaleX(1.0000);transform-origin:0 0;">$$</div><div class="t" style="left:153.22px;top:296.51px;font-weight:700;font-size:8.2px;font-family:'Liberation Sans',sans-serif;color:#2a2a2a;transform:scaleX(1.0000);transform-origin:0 0;">x</div><div class="t" style="left:153.22px;top:311.01px;font-weight:700;font-size:8.2px;font-family:'Liberation Sans',sans-serif;color:#2a2a2a;transform:scaleX(1.0000);transform-origin:0 0;">x</div><div class="t" style="left:154.36px;top:354.01px;font-weight:700;font-size:8.2px;font-family:'Liberation Sans',sans-serif;color:#2a2a2a;transform:scaleX(1.0000);transform-origin:0 0;">/</div><div class="t" style="left:176.54px;top:118.01px;font-weight:400;font-size:8.6px;font-family:'Liberation Mono',monospace;color:#c4c4c4;transform:scaleX(0.9457);transform-origin:0 0;">14</div><div class="t" style="left:176.54px;top:127.18px;font-weight:400;font-size:8.6px;font-family:'Liberation Mono',monospace;color:#c4c4c4;transform:scaleX(0.9457);transform-origin:0 0;">15</div><div class="t" style="left:211.90px;top:127.18px;font-weight:400;font-size:8.6px;font-family:'Liberation Mono',monospace;color:#3c42aa;transform:scaleX(0.9495);transform-origin:0 0;">\begin</div><div class="t" style="left:241.30px;top:127.18px;font-weight:400;font-size:8.6px;font-family:'Liberation Mono',monospace;color:#3a3a3a;transform:scaleX(0.9495);transform-origin:0 0;">{document}</div><div class="t" style="left:176.54px;top:136.35px;font-weight:400;font-size:8.6px;font-family:'Liberation Mono',monospace;color:#c4c4c4;transform:scaleX(0.9457);transform-origin:0 0;">16</div><div class="t" style="left:176.54px;top:145.52px;font-weight:400;font-size:8.6px;font-family:'Liberation Mono',monospace;color:#c4c4c4;transform:scaleX(0.9457);transform-origin:0 0;">17</div><div class="t" style="left:211.90px;top:145.52px;font-weight:400;font-size:8.6px;font-family:'Liberation Mono',monospace;color:#9a9a9a;transform:scaleX(0.9495);transform-origin:0 0;">% Optional subdirectory for latex files (no</div><div class="t" style="left:211.90px;top:154.69px;font-weight:400;font-size:8.6px;font-family:'Liberation Mono',monospace;color:#9a9a9a;transform:scaleX(0.9495);transform-origin:0 0;">spaces):</div><div class="t" style="left:176.54px;top:163.86px;font-weight:400;font-size:8.6px;font-family:'Liberation Mono',monospace;color:#c4c4c4;transform:scaleX(0.9457);transform-origin:0 0;">18</div><div class="t" style="left:211.90px;top:163.86px;font-weight:400;font-size:8.6px;font-family:'Liberation Mono',monospace;color:#a83232;transform:scaleX(0.9495);transform-origin:0 0;">\def\asylatexdir</div><div class="t" style="left:290.30px;top:163.86px;font-weight:400;font-size:8.6px;font-family:'Liberation Mono',monospace;color:#3a3a3a;transform:scaleX(0.9495);transform-origin:0 0;">{}</div><div class="t" style="left:176.54px;top:173.03px;font-weight:400;font-size:8.6px;font-family:'Liberation Mono',monospace;color:#c4c4c4;transform:scaleX(0.9457);transform-origin:0 0;">19</div><div class="t" style="left:211.90px;top:173.03px;font-weight:400;font-size:8.6px;font-family:'Liberation Mono',monospace;color:#9a9a9a;transform:scaleX(0.9495);transform-origin:0 0;">% Optional subdirectory for asy files (no spaces):</div><div class="t" style="left:176.54px;top:182.20px;font-weight:400;font-size:8.6px;font-family:'Liberation Mono',monospace;color:#c4c4c4;transform:scaleX(0.9457);transform-origin:0 0;">20</div><div class="t" style="left:211.90px;top:182.20px;font-weight:400;font-size:8.6px;font-family:'Liberation Mono',monospace;color:#a83232;transform:scaleX(0.9495);transform-origin:0 0;">\def\asydir</div><div class="t" style="left:265.80px;top:182.20px;font-weight:400;font-size:8.6px;font-family:'Liberation Mono',monospace;color:#3a3a3a;transform:scaleX(0.9495);transform-origin:0 0;">{}</div><div class="t" style="left:176.54px;top:191.37px;font-weight:400;font-size:8.6px;font-family:'Liberation Mono',monospace;color:#c4c4c4;transform:scaleX(0.9457);transform-origin:0 0;">21</div><div class="t" style="left:176.54px;top:200.54px;font-weight:400;font-size:8.6px;font-family:'Liberation Mono',monospace;color:#c4c4c4;transform:scaleX(0.9457);transform-origin:0 0;">22</div><div class="t" style="left:211.90px;top:200.54px;font-weight:400;font-size:8.6px;font-family:'Liberation Mono',monospace;color:#3c42aa;transform:scaleX(0.9495);transform-origin:0 0;">\begin</div><div class="t" style="left:241.30px;top:200.54px;font-weight:400;font-size:8.6px;font-family:'Liberation Mono',monospace;color:#3a3a3a;transform:scaleX(0.9495);transform-origin:0 0;">{asydef}</div><div class="t" style="left:176.54px;top:209.71px;font-weight:400;font-size:8.6px;font-family:'Liberation Mono',monospace;color:#c4c4c4;transform:scaleX(0.9457);transform-origin:0 0;">23</div><div class="t" style="left:211.90px;top:209.71px;font-weight:400;font-size:8.6px;font-family:'Liberation Mono',monospace;color:#3a3a3a;transform:scaleX(0.9495);transform-origin:0 0;">// Global Asymptote definitions can be put here.</div><div class="t" style="left:176.54px;top:218.88px;font-weight:400;font-size:8.6px;font-family:'Liberation Mono',monospace;color:#c4c4c4;transform:scaleX(0.9457);transform-origin:0 0;">24</div><div class="t" style="left:211.90px;top:218.88px;font-weight:400;font-size:8.6px;font-family:'Liberation Mono',monospace;color:#3a3a3a;transform:scaleX(0.9495);transform-origin:0 0;">import three;</div><div class="t" style="left:176.54px;top:228.05px;font-weight:400;font-size:8.6px;font-family:'Liberation Mono',monospace;color:#c4c4c4;transform:scaleX(0.9457);transform-origin:0 0;">25</div><div class="t" style="left:211.90px;top:228.05px;font-weight:400;font-size:8.6px;font-family:'Liberation Mono',monospace;color:#3a3a3a;transform:scaleX(0.9495);transform-origin:0 0;">usepackage(&quot;bm&quot;);</div><div class="t" style="left:176.54px;top:237.22px;font-weight:400;font-size:8.6px;font-family:'Liberation Mono',monospace;color:#c4c4c4;transform:scaleX(0.9457);transform-origin:0 0;">26</div><div class="t" style="left:211.90px;top:237.22px;font-weight:400;font-size:8.6px;font-family:'Liberation Mono',monospace;color:#3a3a3a;transform:scaleX(0.9495);transform-origin:0 0;">texpreamble(&quot;</div><div class="t" style="left:275.60px;top:237.22px;font-weight:400;font-size:8.6px;font-family:'Liberation Mono',monospace;color:#a83232;transform:scaleX(0.9495);transform-origin:0 0;">\def\V#1</div><div class="t" style="left:314.80px;top:237.22px;font-weight:400;font-size:8.6px;font-family:'Liberation Mono',monospace;color:#3a3a3a;transform:scaleX(0.9495);transform-origin:0 0;">{</div><div class="t" style="left:319.70px;top:237.22px;font-weight:400;font-size:8.6px;font-family:'Liberation Mono',monospace;color:#a83232;transform:scaleX(0.9495);transform-origin:0 0;">\bm</div><div class="t" style="left:334.40px;top:237.22px;font-weight:400;font-size:8.6px;font-family:'Liberation Mono',monospace;color:#3a3a3a;transform:scaleX(0.9495);transform-origin:0 0;">{#1}}&quot;);</div><div class="t" style="left:176.54px;top:246.39px;font-weight:400;font-size:8.6px;font-family:'Liberation Mono',monospace;color:#c4c4c4;transform:scaleX(0.9457);transform-origin:0 0;">27</div><div class="t" style="left:211.90px;top:246.39px;font-weight:400;font-size:8.6px;font-family:'Liberation Mono',monospace;color:#3a3a3a;transform:scaleX(0.9495);transform-origin:0 0;">// One can globally override the default toolbar</div><div class="t" style="left:211.90px;top:255.56px;font-weight:400;font-size:8.6px;font-family:'Liberation Mono',monospace;color:#3a3a3a;transform:scaleX(0.9495);transform-origin:0 0;">settings here:</div><div class="t" style="left:176.54px;top:264.73px;font-weight:400;font-size:8.6px;font-family:'Liberation Mono',monospace;color:#c4c4c4;transform:scaleX(0.9457);transform-origin:0 0;">28</div><div class="t" style="left:211.90px;top:264.73px;font-weight:400;font-size:8.6px;font-family:'Liberation Mono',monospace;color:#3a3a3a;transform:scaleX(0.9495);transform-origin:0 0;">// settings.toolbar=true;</div><div class="t" style="left:176.54px;top:273.90px;font-weight:400;font-size:8.6px;font-family:'Liberation Mono',monospace;color:#c4c4c4;transform:scaleX(0.9457);transform-origin:0 0;">29</div><div class="t" style="left:211.90px;top:273.90px;font-weight:400;font-size:8.6px;font-family:'Liberation Mono',monospace;color:#3c42aa;transform:scaleX(0.9495);transform-origin:0 0;">\end</div><div class="t" style="left:231.50px;top:273.90px;font-weight:400;font-size:8.6px;font-family:'Liberation Mono',monospace;color:#3a3a3a;transform:scaleX(0.9495);transform-origin:0 0;">{asydef}</div><div class="t" style="left:176.54px;top:283.07px;font-weight:400;font-size:8.6px;font-family:'Liberation Mono',monospace;color:#c4c4c4;transform:scaleX(0.9457);transform-origin:0 0;">30</div><div class="t" style="left:176.54px;top:292.24px;font-weight:400;font-size:8.6px;font-family:'Liberation Mono',monospace;color:#c4c4c4;transform:scaleX(0.9457);transform-origin:0 0;">31</div><div class="t" style="left:211.90px;top:292.24px;font-weight:400;font-size:8.6px;font-family:'Liberation Mono',monospace;color:#3a3a3a;transform:scaleX(0.9495);transform-origin:0 0;">Here is a venn diagram produced with Asymptote,</div><div class="t" style="left:211.90px;top:301.41px;font-weight:400;font-size:8.6px;font-family:'Liberation Mono',monospace;color:#3a3a3a;transform:scaleX(0.9495);transform-origin:0 0;">drawn to width 4cm:</div><div class="t" style="left:176.54px;top:310.58px;font-weight:400;font-size:8.6px;font-family:'Liberation Mono',monospace;color:#c4c4c4;transform:scaleX(0.9457);transform-origin:0 0;">32</div><div class="t" style="left:176.54px;top:319.75px;font-weight:400;font-size:8.6px;font-family:'Liberation Mono',monospace;color:#c4c4c4;transform:scaleX(0.9457);transform-origin:0 0;">33</div><div class="t" style="left:211.90px;top:319.75px;font-weight:400;font-size:8.6px;font-family:'Liberation Mono',monospace;color:#a83232;transform:scaleX(0.9495);transform-origin:0 0;">\def\A</div><div class="t" style="left:241.30px;top:319.75px;font-weight:400;font-size:8.6px;font-family:'Liberation Mono',monospace;color:#3a3a3a;transform:scaleX(0.9495);transform-origin:0 0;">{A}</div><div class="t" style="left:176.54px;top:328.92px;font-weight:400;font-size:8.6px;font-family:'Liberation Mono',monospace;color:#c4c4c4;transform:scaleX(0.9457);transform-origin:0 0;">34</div><div class="t" style="left:211.90px;top:328.92px;font-weight:400;font-size:8.6px;font-family:'Liberation Mono',monospace;color:#a83232;transform:scaleX(0.9495);transform-origin:0 0;">\def\B</div><div class="t" style="left:241.30px;top:328.92px;font-weight:400;font-size:8.6px;font-family:'Liberation Mono',monospace;color:#3a3a3a;transform:scaleX(0.9495);transform-origin:0 0;">{</div><div class="t" style="left:246.20px;top:328.92px;font-weight:400;font-size:8.6px;font-family:'Liberation Mono',monospace;color:#a83232;transform:scaleX(0.9495);transform-origin:0 0;">\V</div><div class="t" style="left:256.00px;top:328.92px;font-weight:400;font-size:8.6px;font-family:'Liberation Mono',monospace;color:#3a3a3a;transform:scaleX(0.9495);transform-origin:0 0;">{B}}</div><div class="t" style="left:176.54px;top:338.09px;font-weight:400;font-size:8.6px;font-family:'Liberation Mono',monospace;color:#c4c4c4;transform:scaleX(0.9457);transform-origin:0 0;">35</div><div class="t" style="left:176.54px;top:347.26px;font-weight:400;font-size:8.6px;font-family:'Liberation Mono',monospace;color:#c4c4c4;transform:scaleX(0.9457);transform-origin:0 0;">36</div><div class="t" style="left:211.90px;top:347.26px;font-weight:400;font-size:8.6px;font-family:'Liberation Mono',monospace;color:#9a9a9a;transform:scaleX(0.9495);transform-origin:0 0;">%\begin{figure}</div><div class="t" style="left:176.54px;top:356.43px;font-weight:400;font-size:8.6px;font-family:'Liberation Mono',monospace;color:#c4c4c4;transform:scaleX(0.9457);transform-origin:0 0;">37</div><div class="t" style="left:211.90px;top:356.43px;font-weight:400;font-size:8.6px;font-family:'Liberation Mono',monospace;color:#3c42aa;transform:scaleX(0.9495);transform-origin:0 0;">\begin</div><div class="t" style="left:241.30px;top:356.43px;font-weight:400;font-size:8.6px;font-family:'Liberation Mono',monospace;color:#3a3a3a;transform:scaleX(0.9495);transform-origin:0 0;">{center}</div><div class="t" style="left:176.54px;top:365.60px;font-weight:400;font-size:8.6px;font-family:'Liberation Mono',monospace;color:#c4c4c4;transform:scaleX(0.9457);transform-origin:0 0;">38</div><div class="t" style="left:211.90px;top:365.60px;font-weight:400;font-size:8.6px;font-family:'Liberation Mono',monospace;color:#3c42aa;transform:scaleX(0.9495);transform-origin:0 0;">\begin</div><div class="t" style="left:241.30px;top:365.60px;font-weight:400;font-size:8.6px;font-family:'Liberation Mono',monospace;color:#3a3a3a;transform:scaleX(0.9495);transform-origin:0 0;">{asy}</div><div class="t" style="left:176.54px;top:374.77px;font-weight:400;font-size:8.6px;font-family:'Liberation Mono',monospace;color:#c4c4c4;transform:scaleX(0.9457);transform-origin:0 0;">39</div><div class="t" style="left:211.90px;top:374.77px;font-weight:400;font-size:8.6px;font-family:'Liberation Mono',monospace;color:#5058c0;transform:scaleX(0.9495);transform-origin:0 0;">size</div><div class="t" style="left:231.50px;top:374.77px;font-weight:400;font-size:8.6px;font-family:'Liberation Mono',monospace;color:#a89070;transform:scaleX(0.9495);transform-origin:0 0;">(</div><div class="t" style="left:236.40px;top:374.77px;font-weight:400;font-size:8.6px;font-family:'Liberation Mono',monospace;color:#8a68a8;transform:scaleX(0.9495);transform-origin:0 0;">4</div><div class="t" style="left:241.30px;top:374.77px;font-weight:400;font-size:8.6px;font-family:'Liberation Mono',monospace;color:#a89070;transform:scaleX(0.9495);transform-origin:0 0;">cm,</div><div class="t" style="left:256.00px;top:374.77px;font-weight:400;font-size:8.6px;font-family:'Liberation Mono',monospace;color:#8a68a8;transform:scaleX(0.9495);transform-origin:0 0;">0</div><div class="t" style="left:260.90px;top:374.77px;font-weight:400;font-size:8.6px;font-family:'Liberation Mono',monospace;color:#a89070;transform:scaleX(0.9495);transform-origin:0 0;">);</div><div class="t" style="left:176.54px;top:383.94px;font-weight:400;font-size:8.6px;font-family:'Liberation Mono',monospace;color:#c4c4c4;transform:scaleX(0.9457);transform-origin:0 0;">40</div><div class="t" style="left:211.90px;top:383.94px;font-weight:400;font-size:8.6px;font-family:'Liberation Mono',monospace;color:#a89070;transform:scaleX(0.9495);transform-origin:0 0;">pen colour</div><div class="t" style="left:260.90px;top:383.94px;font-weight:400;font-size:8.6px;font-family:'Liberation Mono',monospace;color:#8a68a8;transform:scaleX(0.9495);transform-origin:0 0;">1</div><div class="t" style="left:265.80px;top:383.94px;font-weight:400;font-size:8.6px;font-family:'Liberation Mono',monospace;color:#a89070;transform:scaleX(0.9495);transform-origin:0 0;">=red;</div><div class="t" style="left:176.54px;top:393.11px;font-weight:400;font-size:8.6px;font-family:'Liberation Mono',monospace;color:#c4c4c4;transform:scaleX(0.9457);transform-origin:0 0;">41</div><div class="t" style="left:211.90px;top:393.11px;font-weight:400;font-size:8.6px;font-family:'Liberation Mono',monospace;color:#a89070;transform:scaleX(0.9495);transform-origin:0 0;">pen colour</div><div class="t" style="left:260.90px;top:393.11px;font-weight:400;font-size:8.6px;font-family:'Liberation Mono',monospace;color:#8a68a8;transform:scaleX(0.9495);transform-origin:0 0;">2</div><div class="t" style="left:265.80px;top:393.11px;font-weight:400;font-size:8.6px;font-family:'Liberation Mono',monospace;color:#a89070;transform:scaleX(0.9495);transform-origin:0 0;">=green;</div><div class="t" style="left:176.54px;top:402.28px;font-weight:400;font-size:8.6px;font-family:'Liberation Mono',monospace;color:#c4c4c4;transform:scaleX(0.9457);transform-origin:0 0;">42</div><div class="t" style="left:176.54px;top:411.45px;font-weight:400;font-size:8.6px;font-family:'Liberation Mono',monospace;color:#c4c4c4;transform:scaleX(0.9457);transform-origin:0 0;">43</div><div class="t" style="left:211.90px;top:411.45px;font-weight:400;font-size:8.6px;font-family:'Liberation Mono',monospace;color:#4a88a8;transform:scaleX(0.9495);transform-origin:0 0;">pair</div><div class="t" style="left:231.50px;top:411.45px;font-weight:400;font-size:8.6px;font-family:'Liberation Mono',monospace;color:#a89070;transform:scaleX(0.9495);transform-origin:0 0;"> z</div><div class="t" style="left:241.30px;top:411.45px;font-weight:400;font-size:8.6px;font-family:'Liberation Mono',monospace;color:#8a68a8;transform:scaleX(0.9495);transform-origin:0 0;">0</div><div class="t" style="left:246.20px;top:411.45px;font-weight:400;font-size:8.6px;font-family:'Liberation Mono',monospace;color:#a89070;transform:scaleX(0.9495);transform-origin:0 0;">=(</div><div class="t" style="left:256.00px;top:411.45px;font-weight:400;font-size:8.6px;font-family:'Liberation Mono',monospace;color:#8a68a8;transform:scaleX(0.9495);transform-origin:0 0;">0</div><div class="t" style="left:260.90px;top:411.45px;font-weight:400;font-size:8.6px;font-family:'Liberation Mono',monospace;color:#a89070;transform:scaleX(0.9495);transform-origin:0 0;">,</div><div class="t" style="left:265.80px;top:411.45px;font-weight:400;font-size:8.6px;font-family:'Liberation Mono',monospace;color:#8a68a8;transform:scaleX(0.9495);transform-origin:0 0;">0</div><div class="t" style="left:270.70px;top:411.45px;font-weight:400;font-size:8.6px;font-family:'Liberation Mono',monospace;color:#a89070;transform:scaleX(0.9495);transform-origin:0 0;">);</div><div class="t" style="left:176.54px;top:420.62px;font-weight:400;font-size:8.6px;font-family:'Liberation Mono',monospace;color:#c4c4c4;transform:scaleX(0.9457);transform-origin:0 0;">44</div><div class="t" style="left:211.90px;top:420.62px;font-weight:400;font-size:8.6px;font-family:'Liberation Mono',monospace;color:#4a88a8;transform:scaleX(0.9495);transform-origin:0 0;">pair</div><div class="t" style="left:231.50px;top:420.62px;font-weight:400;font-size:8.6px;font-family:'Liberation Mono',monospace;color:#a89070;transform:scaleX(0.9495);transform-origin:0 0;"> z</div><div class="t" style="left:241.30px;top:420.62px;font-weight:400;font-size:8.6px;font-family:'Liberation Mono',monospace;color:#8a68a8;transform:scaleX(0.9495);transform-origin:0 0;">1</div><div class="t" style="left:246.20px;top:420.62px;font-weight:400;font-size:8.6px;font-family:'Liberation Mono',monospace;color:#a89070;transform:scaleX(0.9495);transform-origin:0 0;">=(-</div><div class="t" style="left:260.90px;top:420.62px;font-weight:400;font-size:8.6px;font-family:'Liberation Mono',monospace;color:#8a68a8;transform:scaleX(0.9495);transform-origin:0 0;">1</div><div class="t" style="left:265.80px;top:420.62px;font-weight:400;font-size:8.6px;font-family:'Liberation Mono',monospace;color:#a89070;transform:scaleX(0.9495);transform-origin:0 0;">,</div><div class="t" style="left:270.70px;top:420.62px;font-weight:400;font-size:8.6px;font-family:'Liberation Mono',monospace;color:#8a68a8;transform:scaleX(0.9495);transform-origin:0 0;">0</div><div class="t" style="left:275.60px;top:420.62px;font-weight:400;font-size:8.6px;font-family:'Liberation Mono',monospace;color:#a89070;transform:scaleX(0.9495);transform-origin:0 0;">);</div><div class="t" style="left:176.54px;top:429.79px;font-weight:400;font-size:8.6px;font-family:'Liberation Mono',monospace;color:#c4c4c4;transform:scaleX(0.9457);transform-origin:0 0;">45</div><div class="t" style="left:211.90px;top:429.79px;font-weight:400;font-size:8.6px;font-family:'Liberation Mono',monospace;color:#4a88a8;transform:scaleX(0.9495);transform-origin:0 0;">pair</div><div class="t" style="left:231.50px;top:429.79px;font-weight:400;font-size:8.6px;font-family:'Liberation Mono',monospace;color:#a89070;transform:scaleX(0.9495);transform-origin:0 0;"> z</div><div class="t" style="left:241.30px;top:429.79px;font-weight:400;font-size:8.6px;font-family:'Liberation Mono',monospace;color:#8a68a8;transform:scaleX(0.9495);transform-origin:0 0;">2</div><div class="t" style="left:246.20px;top:429.79px;font-weight:400;font-size:8.6px;font-family:'Liberation Mono',monospace;color:#a89070;transform:scaleX(0.9495);transform-origin:0 0;">=(</div><div class="t" style="left:256.00px;top:429.79px;font-weight:400;font-size:8.6px;font-family:'Liberation Mono',monospace;color:#8a68a8;transform:scaleX(0.9495);transform-origin:0 0;">1</div><div class="t" style="left:260.90px;top:429.79px;font-weight:400;font-size:8.6px;font-family:'Liberation Mono',monospace;color:#a89070;transform:scaleX(0.9495);transform-origin:0 0;">,</div><div class="t" style="left:265.80px;top:429.79px;font-weight:400;font-size:8.6px;font-family:'Liberation Mono',monospace;color:#8a68a8;transform:scaleX(0.9495);transform-origin:0 0;">0</div><div class="t" style="left:270.70px;top:429.79px;font-weight:400;font-size:8.6px;font-family:'Liberation Mono',monospace;color:#a89070;transform:scaleX(0.9495);transform-origin:0 0;">);</div><div class="t" style="left:176.54px;top:438.96px;font-weight:400;font-size:8.6px;font-family:'Liberation Mono',monospace;color:#c4c4c4;transform:scaleX(0.9457);transform-origin:0 0;">46</div><div class="t" style="left:211.90px;top:438.96px;font-weight:400;font-size:8.6px;font-family:'Liberation Mono',monospace;color:#4a88a8;transform:scaleX(0.9495);transform-origin:0 0;">real</div><div class="t" style="left:231.50px;top:438.96px;font-weight:400;font-size:8.6px;font-family:'Liberation Mono',monospace;color:#a89070;transform:scaleX(0.9495);transform-origin:0 0;"> r=</div><div class="t" style="left:246.20px;top:438.96px;font-weight:400;font-size:8.6px;font-family:'Liberation Mono',monospace;color:#8a68a8;transform:scaleX(0.9495);transform-origin:0 0;">1</div><div class="t" style="left:251.10px;top:438.96px;font-weight:400;font-size:8.6px;font-family:'Liberation Mono',monospace;color:#a89070;transform:scaleX(0.9495);transform-origin:0 0;">.</div><div class="t" style="left:256.00px;top:438.96px;font-weight:400;font-size:8.6px;font-family:'Liberation Mono',monospace;color:#8a68a8;transform:scaleX(0.9495);transform-origin:0 0;">5</div><div class="t" style="left:260.90px;top:438.96px;font-weight:400;font-size:8.6px;font-family:'Liberation Mono',monospace;color:#a89070;transform:scaleX(0.9495);transform-origin:0 0;">;</div><div class="t" style="left:176.54px;top:448.13px;font-weight:400;font-size:8.6px;font-family:'Liberation Mono',monospace;color:#c4c4c4;transform:scaleX(0.9457);transform-origin:0 0;">47</div><div class="t" style="left:211.90px;top:448.13px;font-weight:400;font-size:8.6px;font-family:'Liberation Mono',monospace;color:#a89070;transform:scaleX(0.9495);transform-origin:0 0;">path c</div><div class="t" style="left:241.30px;top:448.13px;font-weight:400;font-size:8.6px;font-family:'Liberation Mono',monospace;color:#8a68a8;transform:scaleX(0.9495);transform-origin:0 0;">1</div><div class="t" style="left:246.20px;top:448.13px;font-weight:400;font-size:8.6px;font-family:'Liberation Mono',monospace;color:#a89070;transform:scaleX(0.9495);transform-origin:0 0;">=</div><div class="t" style="left:251.10px;top:448.13px;font-weight:400;font-size:8.6px;font-family:'Liberation Mono',monospace;color:#5058c0;transform:scaleX(0.9495);transform-origin:0 0;">circle</div><div class="t" style="left:280.50px;top:448.13px;font-weight:400;font-size:8.6px;font-family:'Liberation Mono',monospace;color:#a89070;transform:scaleX(0.9495);transform-origin:0 0;">(z</div><div class="t" style="left:290.30px;top:448.13px;font-weight:400;font-size:8.6px;font-family:'Liberation Mono',monospace;color:#8a68a8;transform:scaleX(0.9495);transform-origin:0 0;">1</div><div class="t" style="left:295.20px;top:448.13px;font-weight:400;font-size:8.6px;font-family:'Liberation Mono',monospace;color:#a89070;transform:scaleX(0.9495);transform-origin:0 0;">,r);</div><div class="t" style="left:176.54px;top:457.30px;font-weight:400;font-size:8.6px;font-family:'Liberation Mono',monospace;color:#c4c4c4;transform:scaleX(0.9457);transform-origin:0 0;">48</div><div class="t" style="left:211.90px;top:457.30px;font-weight:400;font-size:8.6px;font-family:'Liberation Mono',monospace;color:#a89070;transform:scaleX(0.9495);transform-origin:0 0;">path c</div><div class="t" style="left:241.30px;top:457.30px;font-weight:400;font-size:8.6px;font-family:'Liberation Mono',monospace;color:#8a68a8;transform:scaleX(0.9495);transform-origin:0 0;">2</div><div class="t" style="left:246.20px;top:457.30px;font-weight:400;font-size:8.6px;font-family:'Liberation Mono',monospace;color:#a89070;transform:scaleX(0.9495);transform-origin:0 0;">=</div><div class="t" style="left:251.10px;top:457.30px;font-weight:400;font-size:8.6px;font-family:'Liberation Mono',monospace;color:#5058c0;transform:scaleX(0.9495);transform-origin:0 0;">circle</div><div class="t" style="left:280.50px;top:457.30px;font-weight:400;font-size:8.6px;font-family:'Liberation Mono',monospace;color:#a89070;transform:scaleX(0.9495);transform-origin:0 0;">(z</div><div class="t" style="left:290.30px;top:457.30px;font-weight:400;font-size:8.6px;font-family:'Liberation Mono',monospace;color:#8a68a8;transform:scaleX(0.9495);transform-origin:0 0;">2</div><div class="t" style="left:295.20px;top:457.30px;font-weight:400;font-size:8.6px;font-family:'Liberation Mono',monospace;color:#a89070;transform:scaleX(0.9495);transform-origin:0 0;">,r);</div><div class="t" style="left:176.54px;top:466.47px;font-weight:400;font-size:8.6px;font-family:'Liberation Mono',monospace;color:#c4c4c4;transform:scaleX(0.9457);transform-origin:0 0;">49</div><div class="t" style="left:211.90px;top:466.47px;font-weight:400;font-size:8.6px;font-family:'Liberation Mono',monospace;color:#3038a0;transform:scaleX(0.9495);transform-origin:0 0;">fill</div><div class="t" style="left:231.50px;top:466.47px;font-weight:400;font-size:8.6px;font-family:'Liberation Mono',monospace;color:#a89070;transform:scaleX(0.9495);transform-origin:0 0;">(c</div><div class="t" style="left:241.30px;top:466.47px;font-weight:400;font-size:8.6px;font-family:'Liberation Mono',monospace;color:#8a68a8;transform:scaleX(0.9495);transform-origin:0 0;">1</div><div class="t" style="left:246.20px;top:466.47px;font-weight:400;font-size:8.6px;font-family:'Liberation Mono',monospace;color:#a89070;transform:scaleX(0.9495);transform-origin:0 0;">,colour</div><div class="t" style="left:280.50px;top:466.47px;font-weight:400;font-size:8.6px;font-family:'Liberation Mono',monospace;color:#8a68a8;transform:scaleX(0.9495);transform-origin:0 0;">1</div><div class="t" style="left:285.40px;top:466.47px;font-weight:400;font-size:8.6px;font-family:'Liberation Mono',monospace;color:#a89070;transform:scaleX(0.9495);transform-origin:0 0;">);</div><div class="t" style="left:176.54px;top:475.64px;font-weight:400;font-size:8.6px;font-family:'Liberation Mono',monospace;color:#c4c4c4;transform:scaleX(0.9457);transform-origin:0 0;">50</div><div class="t" style="left:211.90px;top:475.64px;font-weight:400;font-size:8.6px;font-family:'Liberation Mono',monospace;color:#3038a0;transform:scaleX(0.9495);transform-origin:0 0;">fill</div><div class="t" style="left:231.50px;top:475.64px;font-weight:400;font-size:8.6px;font-family:'Liberation Mono',monospace;color:#a89070;transform:scaleX(0.9495);transform-origin:0 0;">(c</div><div class="t" style="left:241.30px;top:475.64px;font-weight:400;font-size:8.6px;font-family:'Liberation Mono',monospace;color:#8a68a8;transform:scaleX(0.9495);transform-origin:0 0;">2</div><div class="t" style="left:246.20px;top:475.64px;font-weight:400;font-size:8.6px;font-family:'Liberation Mono',monospace;color:#a89070;transform:scaleX(0.9495);transform-origin:0 0;">,colour</div><div class="t" style="left:280.50px;top:475.64px;font-weight:400;font-size:8.6px;font-family:'Liberation Mono',monospace;color:#8a68a8;transform:scaleX(0.9495);transform-origin:0 0;">2</div><div class="t" style="left:285.40px;top:475.64px;font-weight:400;font-size:8.6px;font-family:'Liberation Mono',monospace;color:#a89070;transform:scaleX(0.9495);transform-origin:0 0;">);</div><div class="t" style="left:176.54px;top:484.81px;font-weight:400;font-size:8.6px;font-family:'Liberation Mono',monospace;color:#c4c4c4;transform:scaleX(0.9457);transform-origin:0 0;">51</div><div class="t" style="left:176.54px;top:493.98px;font-weight:400;font-size:8.6px;font-family:'Liberation Mono',monospace;color:#c4c4c4;transform:scaleX(0.9457);transform-origin:0 0;height:7.02px;overflow:hidden;">52</div><div class="t" style="left:211.90px;top:493.98px;font-weight:400;font-size:8.6px;font-family:'Liberation Mono',monospace;color:#a89070;transform:scaleX(0.9495);transform-origin:0 0;height:7.02px;overflow:hidden;">picture intersection=</div><div class="t" style="left:314.80px;top:493.98px;font-weight:700;font-size:8.6px;font-family:'Liberation Mono',monospace;color:#802222;transform:scaleX(0.9495);transform-origin:0 0;height:7.02px;overflow:hidden;">new</div><div class="t" style="left:329.50px;top:493.98px;font-weight:400;font-size:8.6px;font-family:'Liberation Mono',monospace;color:#a89070;transform:scaleX(0.9495);transform-origin:0 0;height:7.02px;overflow:hidden;"> picture;</div><div class="t" style="left:209.30px;top:102.61px;font-weight:700;font-size:9.2px;font-family:'Liberation Sans',sans-serif;color:#b4b4b4;transform:scaleX(1.1906);transform-origin:0 0;">latexusage.tex</div><div class="t" style="left:371.80px;top:102.61px;font-weight:700;font-size:9.2px;font-family:'Liberation Sans',sans-serif;color:#b9b9b9;transform:scaleX(0.9394);transform-origin:0 0;">L: 22 C: 4</div><div class="t" style="left:467.60px;top:102.53px;font-weight:700;font-size:8px;font-family:'Liberation Sans',sans-serif;color:#cfcfcf;">»</div><div class="t" style="left:612.70px;top:102.51px;font-weight:700;font-size:9.2px;font-family:'Liberation Sans',sans-serif;color:#b4b4b4;transform:scaleX(1.1568);transform-origin:0 0;">46%</div><div class="t" style="left:478.60px;top:117.60px;font-weight:700;font-size:8px;font-family:'Liberation Serif',serif;color:#f0f0f0;transform:scaleX(0.9500);transform-origin:0 0;">1</div><div class="t" style="left:563.30px;top:184.69px;font-weight:400;font-size:6.7px;font-family:'Liberation Serif',serif;color:#161616;transform:scaleX(0.9603);transform-origin:0 0;">Here is a venn diagram produced with Asymptote, drawn to width 4cm:</div><div class="t" style="left:564.00px;top:265.79px;font-weight:400;font-size:6.7px;font-family:'Liberation Serif',serif;color:#161616;transform:scaleX(0.9618);transform-origin:0 0;">Each graph is drawn in its own environment. One can specify the width</div><div class="t" style="left:555.00px;top:272.93px;font-weight:400;font-size:6.7px;font-family:'Liberation Serif',serif;color:#161616;transform:scaleX(0.9929);transform-origin:0 0;">and height to LaTeX explicitly.  This 3D example can be viewed interac-</div><div class="t" style="left:555.00px;top:280.07px;font-weight:400;font-size:6.7px;font-family:'Liberation Serif',serif;color:#161616;transform:scaleX(0.9986);transform-origin:0 0;">tively either with Adobe Reader or Asymptote&#x27;s fast OpenGL-based ren-</div><div class="t" style="left:555.00px;top:287.21px;font-weight:400;font-size:6.7px;font-family:'Liberation Serif',serif;color:#161616;transform:scaleX(1.0234);transform-origin:0 0;">derer.  To support latexmk, 3D figures should specify inline=true.  It is</div><div class="t" style="left:555.00px;top:294.35px;font-weight:400;font-size:6.7px;font-family:'Liberation Serif',serif;color:#161616;transform:scaleX(0.9924);transform-origin:0 0;">sometimes desirable to embed 3D files as annotated attachments; this re-</div><div class="t" style="left:555.00px;top:301.49px;font-weight:400;font-size:6.7px;font-family:'Liberation Serif',serif;color:#161616;transform:scaleX(1.0190);transform-origin:0 0;">quires the attach=true option as well as the attachfile2 LaTeX package.</div><div class="t" style="left:563.40px;top:386.99px;font-weight:400;font-size:6.7px;font-family:'Liberation Serif',serif;color:#161616;transform:scaleX(0.9524);transform-origin:0 0;">One can also scale the figure to the full line width:</div><div class="t" style="left:643.50px;top:201.21px;font-weight:400;font-size:5.6px;font-family:'Liberation Serif',serif;font-style:italic;color:#333;transform:scaleX(1.1693);transform-origin:0 0;">A</div><div class="t" style="left:654.50px;top:201.21px;font-weight:400;font-size:5.6px;font-family:'Liberation Serif',serif;font-style:italic;color:#333;transform:scaleX(1.3155);transform-origin:0 0;">B</div><div class="t" style="left:643.50px;top:248.21px;font-weight:400;font-size:5.6px;font-family:'Liberation Serif',serif;font-style:italic;color:#333;transform:scaleX(1.1693);transform-origin:0 0;">A</div><div class="t" style="left:654.50px;top:248.21px;font-weight:400;font-size:5.6px;font-family:'Liberation Serif',serif;font-style:italic;color:#333;transform:scaleX(1.3155);transform-origin:0 0;">B</div><div class="t" style="left:640.20px;top:225.63px;font-weight:400;font-size:4.5px;font-family:'Liberation Serif',serif;font-style:italic;color:#400;transform:scaleX(1.0914);transform-origin:0 0;">A</div><div class="t" style="left:659.30px;top:225.63px;font-weight:400;font-size:4.5px;font-family:'Liberation Serif',serif;font-style:italic;color:#040;transform:scaleX(1.2733);transform-origin:0 0;">B</div><div class="t" style="left:657.00px;top:347.97px;font-weight:400;font-size:8.4px;font-family:'Liberation Serif',serif;font-style:italic;color:#6a6ad8;transform:scaleX(1.1356);transform-origin:0 0;">V − E + F = 2</div><div class="t" style="left:628.20px;top:400.43px;font-weight:400;font-size:4.5px;font-family:'Liberation Serif',serif;font-style:italic;color:#d03030;transform:scaleX(1.2308);transform-origin:0 0;">m</div><div class="t" style="left:742.00px;top:399.81px;font-weight:400;font-size:5px;font-family:'Liberation Serif',serif;font-style:italic;color:#3a7a3a;transform:scaleX(1.2004);transform-origin:0 0;">M</div><div class="t" style="left:714.00px;top:406.23px;font-weight:400;font-size:4.5px;font-family:'Liberation Serif',serif;font-style:italic;color:#5050c0;transform:scaleX(1.5021);transform-origin:0 0;">x</div><div class="t" style="left:591.50px;top:409.23px;font-weight:400;font-size:4.5px;font-family:'Liberation Serif',serif;font-style:italic;color:#d03030;transform:scaleX(1.4276);transform-origin:0 0;">r</div><div class="t" style="left:634.00px;top:426.51px;font-weight:400;font-size:5px;font-family:'Liberation Serif',serif;font-style:italic;color:#3030c0;transform:scaleX(1.5419);transform-origin:0 0;">z</div><div class="t" style="left:647.50px;top:445.89px;font-weight:400;font-size:5.5px;font-family:'Liberation Serif',serif;font-style:italic;color:#3a7a3a;transform:scaleX(1.3394);transform-origin:0 0;">X</div><div class="t" style="left:649.20px;top:467.19px;font-weight:400;font-size:5.5px;font-family:'Liberation Serif',serif;color:#444;transform:scaleX(0.9455);transform-origin:0 0;">1</div><div class="t" style="left:27.50px;top:506.35px;font-weight:700;font-size:6.2px;font-family:'Liberation Sans',sans-serif;color:#e0e0e0;transform:scaleX(0.9869);transform-origin:0 0;">Structure</div><div class="t" style="left:72.50px;top:506.35px;font-weight:700;font-size:6.2px;font-family:'Liberation Sans',sans-serif;color:#3a3a3a;transform:scaleX(0.8880);transform-origin:0 0;">Messages / Log</div><div class="t" style="left:127.50px;top:506.35px;font-weight:700;font-size:6.2px;font-family:'Liberation Sans',sans-serif;color:#e0e0e0;transform:scaleX(1.0384);transform-origin:0 0;">Pdf Viewer</div><div class="t" style="left:174.80px;top:506.35px;font-weight:700;font-size:6.2px;font-family:'Liberation Sans',sans-serif;color:#3a3a3a;transform:scaleX(0.9479);transform-origin:0 0;">Source Viewer</div><div class="t" style="left:222.80px;top:504.27px;font-weight:400;font-size:9.6px;font-family:'Liberation Sans',sans-serif;color:#c4c4c4;transform:scaleX(0.9441);transform-origin:0 0;">Ready</div><div class="t" style="left:688.40px;top:504.27px;font-weight:700;font-size:9.6px;font-family:'Liberation Sans',sans-serif;color:#c2c2c2;transform:scaleX(0.9596);transform-origin:0 0;">UTF-8</div><div class="t" style="left:723.70px;top:504.27px;font-weight:700;font-size:9.6px;font-family:'Liberation Sans',sans-serif;color:#c2c2c2;transform:scaleX(0.9621);transform-origin:0 0;">Normal Mode</div></div></body></html>
